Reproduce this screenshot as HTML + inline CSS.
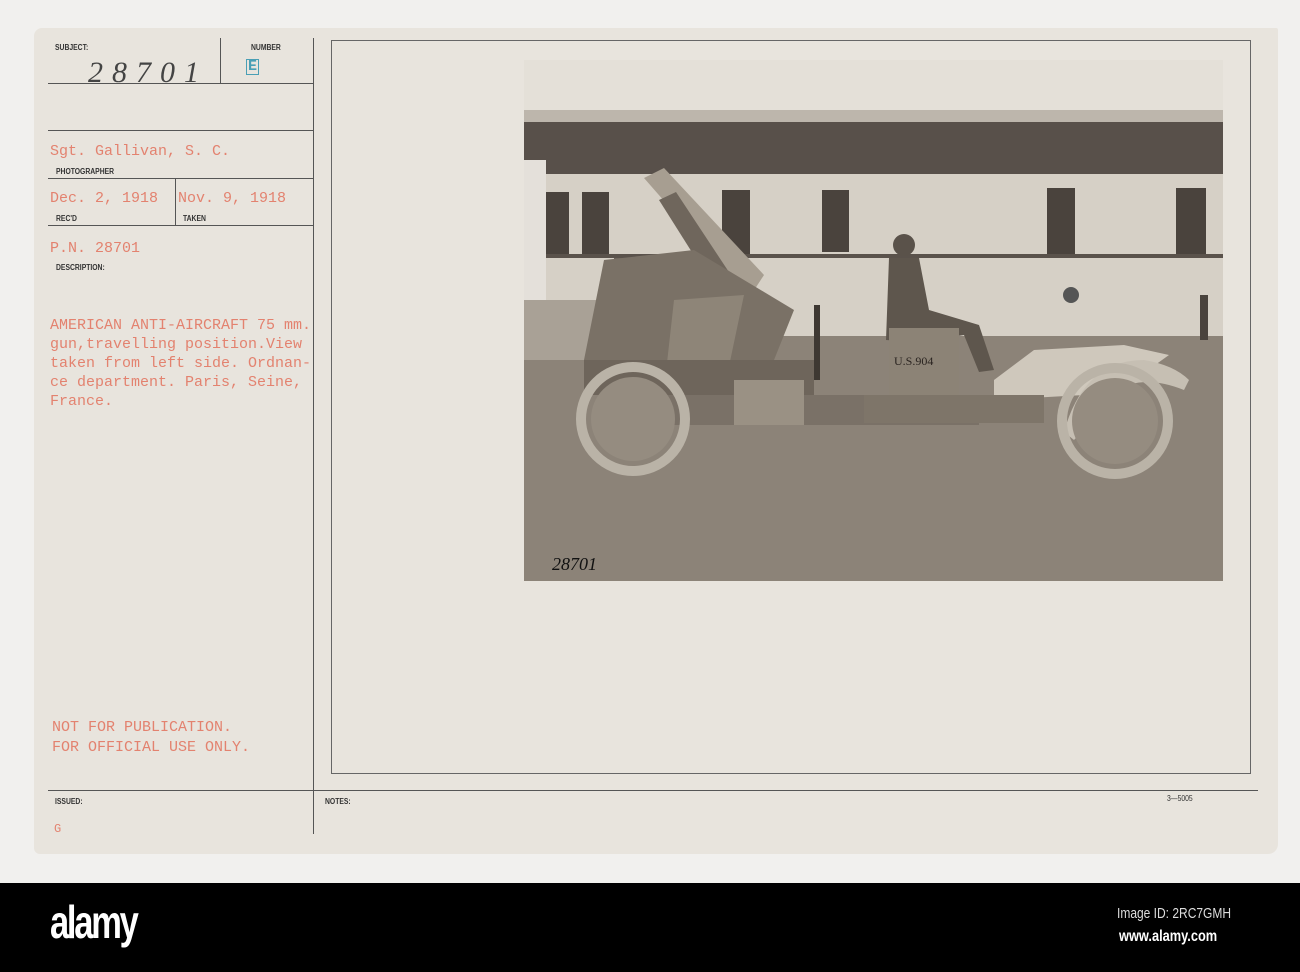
<!DOCTYPE html>
<html><head><meta charset="utf-8"><style>
body{margin:0;width:1300px;height:972px;background:#f1f0ee;position:relative;overflow:hidden;font-family:"Liberation Mono",monospace}
.card{position:absolute;left:34px;top:28px;width:1244px;height:826px;background:#e8e4dd;border-radius:8px 2px 10px 6px}
.a{position:absolute;white-space:pre}
.r{color:#e3826f;font-size:15px}
.l{font-family:"Liberation Sans",sans-serif;font-size:8px;font-weight:bold;color:#333;transform:scaleX(.85);transform-origin:left}
.h{position:absolute;height:1px;background:#555}
.v{position:absolute;width:1px;background:#555}
.bar{position:absolute;left:0;top:883px;width:1300px;height:89px;background:#000}
</style></head><body>
<div class="card"></div>
<div class="h" style="left:48px;top:83px;width:265px"></div>
<div class="v" style="left:220px;top:38px;height:45px"></div>
<div class="h" style="left:48px;top:130px;width:265px"></div>
<div class="h" style="left:48px;top:178px;width:265px"></div>
<div class="v" style="left:175px;top:178px;height:47px"></div>
<div class="h" style="left:48px;top:225px;width:265px"></div>
<div class="v" style="left:313px;top:38px;height:796px"></div>
<div class="h" style="left:48px;top:790px;width:1210px"></div>
<div style="position:absolute;left:331px;top:40px;width:918px;height:732px;border:1px solid #666"></div>
<div class="a l" style="left:55px;top:43px">SUBJECT:</div>
<div class="a l" style="left:251px;top:43px">NUMBER</div>
<div class="a" style="left:246px;top:59px;color:#4a9fb5;font-weight:bold;font-size:15px;border:1px solid #4a9fb5;padding:0 1px;line-height:14px">E</div>
<div class="a" style="left:88px;top:56px;font-family:'Liberation Serif',serif;font-style:italic;font-size:30px;color:#444;letter-spacing:9px">28701</div>
<div class="a r" style="left:50px;top:143px">Sgt. Gallivan, S. C.</div>
<div class="a l" style="left:56px;top:167px">PHOTOGRAPHER</div>
<div class="a r" style="left:50px;top:190px">Dec. 2, 1918</div>
<div class="a r" style="left:178px;top:190px">Nov. 9, 1918</div>
<div class="a l" style="left:56px;top:214px">REC'D</div>
<div class="a l" style="left:183px;top:214px">TAKEN</div>
<div class="a r" style="left:50px;top:240px">P.N. 28701</div>
<div class="a l" style="left:56px;top:263px">DESCRIPTION:</div>
<div class="a r" style="left:50px;top:316px;line-height:19px">AMERICAN ANTI-AIRCRAFT 75 mm.
gun,travelling position.View
taken from left side. Ordnan-
ce department. Paris, Seine,
France.</div>
<div class="a r" style="left:52px;top:718px;line-height:20px">NOT FOR PUBLICATION.
FOR OFFICIAL USE ONLY.</div>
<div class="a l" style="left:55px;top:797px">ISSUED:</div>
<div class="a r" style="left:54px;top:822px;font-size:12px">G</div>
<div class="a l" style="left:325px;top:797px">NOTES:</div>
<div class="a l" style="left:1167px;top:794px;font-weight:normal">3—5005</div>
<svg style="position:absolute;left:524px;top:60px" width="699" height="521" viewBox="0 0 699 521">
<rect width="699" height="521" fill="#8a8177"/>
<rect width="699" height="65" fill="#e4e0d8"/>
<rect x="0" y="50" width="699" height="13" fill="#bdb6ac"/>
<rect x="0" y="62" width="699" height="52" fill="#58504a"/>
<rect x="0" y="114" width="699" height="165" fill="#d6d0c6"/>
<g fill="#4a433d"><rect x="18" y="132" width="27" height="62"/><rect x="58" y="132" width="27" height="62"/><rect x="198" y="130" width="28" height="64"/><rect x="298" y="130" width="27" height="62"/><rect x="523" y="128" width="28" height="66"/><rect x="652" y="128" width="30" height="66"/></g>
<rect x="0" y="194" width="699" height="4" fill="#5a524b"/>
<rect x="90" y="198" width="80" height="80" fill="#6a6058"/>
<rect x="0" y="276" width="699" height="245" fill="#8c8378"/>
<rect x="0" y="100" width="22" height="200" fill="#e4e0da"/>
<rect x="0" y="240" width="90" height="60" fill="#a9a196"/>
<!-- gun -->
<polygon points="120,118 140,108 240,215 225,238" fill="#a79e91"/>
<polygon points="135,140 152,132 230,250 212,262" fill="#6f665c"/>
<polygon points="80,200 170,190 270,250 250,300 120,320 60,300" fill="#7a7166"/>
<polygon points="150,240 220,235 200,330 140,330" fill="#8e8578"/>
<rect x="60" y="300" width="230" height="35" fill="#6e655b"/>
<rect x="75" y="335" width="380" height="30" fill="#7a7167"/>
<rect x="210" y="320" width="70" height="45" fill="#9a9184"/>
<!-- soldier -->
<circle cx="380" cy="185" r="11" fill="#5a524a"/>
<polygon points="365,198 395,198 405,250 455,265 470,310 455,312 440,275 395,282 362,280" fill="#5e564d"/>
<rect x="290" y="245" width="6" height="75" fill="#3e3832"/>
<!-- body -->
<rect x="365" y="268" width="70" height="70" fill="#8c8376"/>
<text x="370" y="305" font-family="Liberation Serif" font-size="12" fill="#2a2420">U.S.904</text>
<polygon points="470,320 510,290 600,285 645,295 610,320 560,335 470,340" fill="#cfc8bc"/>
<path d="M540 372 Q560 300 620 300 Q650 305 665 320 L660 330 Q610 310 580 340 Q565 365 550 380Z" fill="#c6bfb3"/>
<rect x="340" y="335" width="180" height="28" fill="#7e7569"/>
<circle cx="547" cy="235" r="8" fill="#555"/>
<circle cx="109" cy="359" r="52" fill="none" stroke="#bab3a7" stroke-width="10"/>
<circle cx="109" cy="359" r="42" fill="#958c80"/>
<circle cx="591" cy="361" r="53" fill="none" stroke="#bab3a7" stroke-width="10"/>
<circle cx="591" cy="361" r="43" fill="#958c80"/>
<rect x="676" y="235" width="8" height="45" fill="#4a433d"/>
<text x="28" y="510" font-family="Liberation Serif" font-style="italic" font-size="18" fill="#111">28701</text>
</svg>
<div class="bar"></div>
<div class="a" style="left:50px;top:895px;font-family:'Liberation Sans',sans-serif;font-weight:bold;font-size:46px;color:#fff;letter-spacing:-3px;transform:scaleX(.75);transform-origin:left">alamy</div>
<div class="a" style="left:1117px;top:905px;font-family:'Liberation Sans',sans-serif;font-size:15px;color:#ddd;transform:scaleX(.8);transform-origin:left">Image ID: 2RC7GMH</div>
<div class="a" style="left:1119px;top:928px;font-family:'Liberation Sans',sans-serif;font-size:16px;font-weight:bold;color:#fff;transform:scaleX(.8);transform-origin:left">www.alamy.com</div>
</body></html>
